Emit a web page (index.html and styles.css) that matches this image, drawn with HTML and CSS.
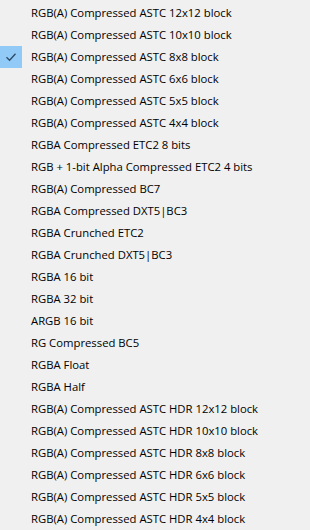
FILE: index.html
```html
<!DOCTYPE html>
<html lang="en">
<head>
    <meta charset="UTF-8">
    <title>Texture formats</title>
    <link rel="stylesheet" href="styles.css">
</head>
<body>
    <!-- format menu -->
    <ul class="menu">
        <li class="menu-item">RGB(A) Compressed ASTC 12x12 block</li>
        <li class="menu-item">RGB(A) Compressed ASTC 10x10 block</li>
        <li class="menu-item checked">
            <span class="check">
                <svg width="12" height="10" viewBox="0 0 12 10">
                    <path d="M1.5 5.2 L4.6 8.2 L10.5 1.8" fill="none" stroke="#2c4a66" stroke-width="1.3"/>
                </svg>
            </span>
            RGB(A) Compressed ASTC 8x8 block
        </li>
        <li class="menu-item">RGB(A) Compressed ASTC 6x6 block</li>
        <li class="menu-item">RGB(A) Compressed ASTC 5x5 block</li>
        <li class="menu-item">RGB(A) Compressed ASTC 4x4 block</li>
        <li class="menu-item">RGBA Compressed ETC2 8 bits</li>
        <li class="menu-item">RGB + 1-bit Alpha Compressed ETC2 4 bits</li>
        <li class="menu-item">RGB(A) Compressed BC7</li>
        <li class="menu-item">RGBA Compressed DXT5|BC3</li>
        <li class="menu-item">RGBA Crunched ETC2</li>
        <li class="menu-item">RGBA Crunched DXT5|BC3</li>
        <li class="menu-item">RGBA 16 bit</li>
        <li class="menu-item">RGBA 32 bit</li>
        <li class="menu-item">ARGB 16 bit</li>
        <li class="menu-item">RG Compressed BC5</li>
        <li class="menu-item">RGBA Float</li>
        <li class="menu-item">RGBA Half</li>
        <li class="menu-item">RGB(A) Compressed ASTC HDR 12x12 block</li>
        <li class="menu-item">RGB(A) Compressed ASTC HDR 10x10 block</li>
        <li class="menu-item">RGB(A) Compressed ASTC HDR 8x8 block</li>
        <li class="menu-item">RGB(A) Compressed ASTC HDR 6x6 block</li>
        <li class="menu-item">RGB(A) Compressed ASTC HDR 5x5 block</li>
        <li class="menu-item">RGB(A) Compressed ASTC HDR 4x4 block</li>
    </ul>
</body>
</html>
```
FILE: styles.css
```css
* {
    margin: 0;
    padding: 0;
}

html,
body {
    width: 100%;
    height: 100%;
    background-color: #f0f0f0;
}

body {
    font-family: "Open Sans", "Noto Sans", sans-serif;
    font-size: 11.3px;
    color: #000;
}

.menu {
    list-style: none;
    padding-top: 2px;
}

.menu-item {
    position: relative;
    height: 22px;
    line-height: 22px;
    padding-left: 31px;
    white-space: nowrap;
}

/* 勾选标记 */
.check {
    position: absolute;
    left: 0;
    top: 0;
    width: 22px;
    height: 22px;
    background-color: #91c9f7;
    display: flex;
    align-items: center;
    justify-content: center;
}
```
